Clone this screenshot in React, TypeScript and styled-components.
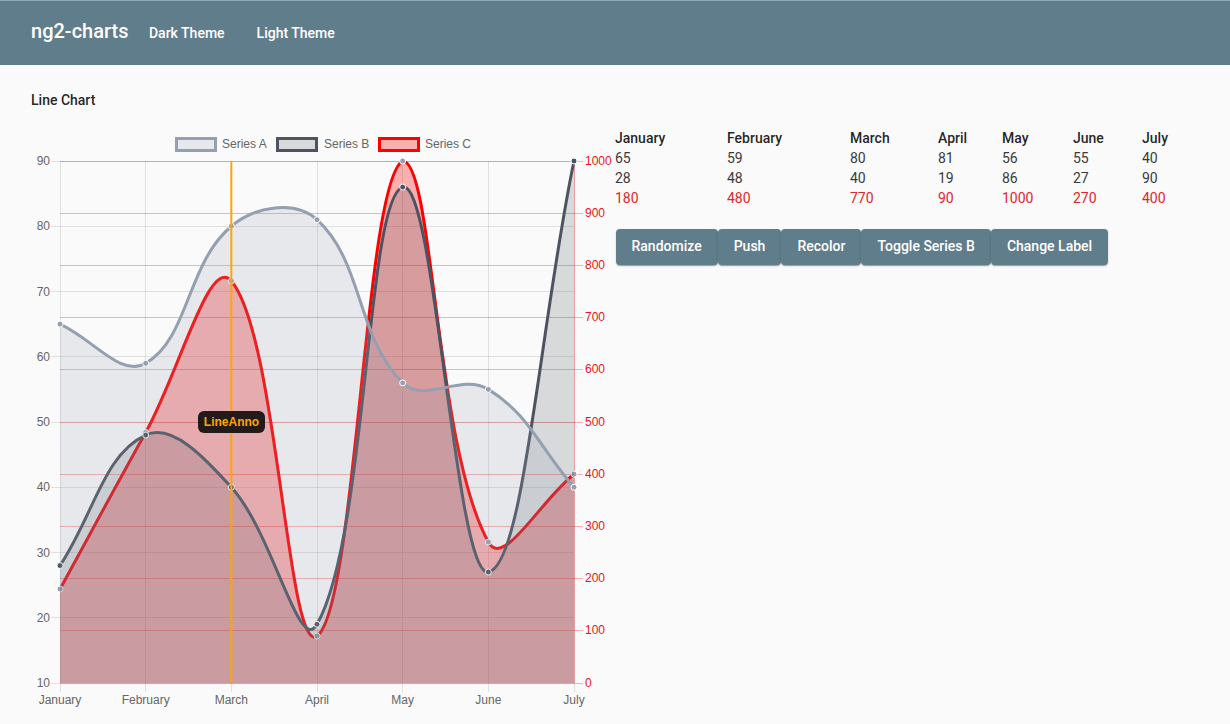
import React from 'react'
import styled, { createGlobalStyle } from 'styled-components'

const GlobalStyle = createGlobalStyle`
html, body {
  margin: 0;
  padding: 0;
  background: #fafafa;
  font-family: Roboto, "Liberation Sans", sans-serif;
  color: rgba(0, 0, 0, 0.87);
}
`

const Page = styled.div`
width: 1230px;
height: 724px;
overflow: hidden;
`

const Toolbar = styled.header`
height: 64px;
background: #607d8b;
border-top: 1px solid #8fa9b8;
display: flex;
align-items: center;
padding-left: 31px;
color: #fff;
`

const Brand = styled.span`
font-size: 20px;
font-weight: 500;
margin-right: 4.5px;
position: relative;
top: -2px;
`

const NavLink = styled.a`
font-size: 14px;
font-weight: 500;
line-height: 36px;
padding: 0 16px;
`

const Title = styled.h4`
margin: 25px 0 18px 31px;
font-size: 14px;
line-height: 20px;
font-weight: 500;
`

const Row = styled.div`
display: flex;
align-items: flex-start;
`

const ChartSvg = styled.svg`
display: block;
width: 615px;
height: 596px;
flex: none;
`

const Side = styled.div`
width: 615px;
`

const DataTable = styled.table`
border-collapse: collapse;
table-layout: fixed;
width: 596px;
font-size: 14px;
line-height: 20px;
`

const HeadCell = styled.th`
padding: 0;
text-align: left;
font-weight: 500;
`

const Cell = styled.td<{ $red?: boolean }>`
padding: 0;
font-weight: 400;
color: ${p => (p.$red ? '#e0262c' : '#3a3a3a')};
`

const Buttons = styled.div`
display: flex;
margin: 21px 0 0 0.5px;
`

const Btn = styled.button`
height: 36px;
padding: 0 16px 2px;
border: 0;
border-radius: 4px;
background: #607d8b;
color: #fff;
font-family: inherit;
font-size: 14px;
font-weight: 500;
box-shadow: 0 2px 1px -1px rgba(0, 0, 0, 0.2), 0 1px 1px 0 rgba(0, 0, 0, 0.14), 0 1px 3px 0 rgba(0, 0, 0, 0.12);
`

const AxisText = styled.text<{ $color?: string }>`
font-family: "Liberation Sans", Arial, sans-serif;
font-size: 12px;
fill: ${p => p.$color || '#666'};
`

const AnnoText = styled.text`
font-family: "Liberation Sans", Arial, sans-serif;
font-size: 12px;
font-weight: 700;
fill: #ffa500;
`

const months = ['January', 'February', 'March', 'April', 'May', 'June', 'July']
const colWidths = [112, 123, 88, 64, 71, 69, 69]

const series = [
  { label: 'Series A', data: [65, 59, 80, 81, 56, 55, 40], max: 90, min: 10, line: 'rgb(148,159,177)', fill: 'rgba(148,159,177,0.2)', point: '#949fb1' },
  { label: 'Series B', data: [28, 48, 40, 19, 86, 27, 90], max: 90, min: 10, line: 'rgb(77,83,96)', fill: 'rgba(77,83,96,0.2)', point: '#4d5360' },
  { label: 'Series C', data: [180, 480, 770, 90, 1000, 270, 400], max: 1000, min: 0, line: 'red', fill: 'rgba(255,0,0,0.3)', point: '#949fb1' },
]

const LEFT = 60
const RIGHT = 574
const TOP = 161
const BOTTOM = 683
const TENSION = 0.4

const xAt = (i: number) => LEFT + (i * (RIGHT - LEFT)) / 6
// grid lines sit on whole pixels like canvas ones do
const crisp = (v: number) => Math.floor(v) + 0.5

const clamp = (v: number, lo: number, hi: number) => Math.min(hi, Math.max(lo, v))

// same control points chart.js uses for its bezier lines
function buildPath(pts: { x: number; y: number }[]) {
  const ctrl = pts.map((cur, i) => {
    const prev = pts[i - 1] || cur
    const next = pts[i + 1] || cur
    const d01 = Math.hypot(cur.x - prev.x, cur.y - prev.y)
    const d12 = Math.hypot(next.x - cur.x, next.y - cur.y)
    const fa = (TENSION * d01) / (d01 + d12)
    const fb = (TENSION * d12) / (d01 + d12)
    return {
      px: clamp(cur.x - fa * (next.x - prev.x), LEFT, RIGHT),
      py: clamp(cur.y - fa * (next.y - prev.y), TOP, BOTTOM),
      nx: clamp(cur.x + fb * (next.x - prev.x), LEFT, RIGHT),
      ny: clamp(cur.y + fb * (next.y - prev.y), TOP, BOTTOM),
    }
  })
  let d = `M${pts[0].x} ${pts[0].y}`
  for (let i = 1; i < pts.length; i++) {
    d += ` C${ctrl[i - 1].nx} ${ctrl[i - 1].ny} ${ctrl[i].px} ${ctrl[i].py} ${pts[i].x} ${pts[i].y}`
  }
  return d
}

const LineChart: React.FC = () => {
  const leftTicks = [90, 80, 70, 60, 50, 40, 30, 20, 10]
  const rightTicks = [1000, 900, 800, 700, 600, 500, 400, 300, 200, 100, 0]
  const yLeft = (v: number) => BOTTOM - ((v - 10) / 80) * (BOTTOM - TOP)
  const yRight = (v: number) => BOTTOM - (v / 1000) * (BOTTOM - TOP)
  const legend = [
    { box: 176.5, text: 222 },
    { box: 277.5, text: 324 },
    { box: 379.5, text: 425 },
  ]

  return (
    <ChartSvg viewBox="0 128 615 596">
      <defs>
        <clipPath id="area">
          <rect x={LEFT - 2} y={TOP - 2} width={RIGHT - LEFT + 4} height={BOTTOM - TOP + 4} />
        </clipPath>
      </defs>

      {legend.map((l, i) => (
        <g key={series[i].label}>
          <rect x={l.box} y={138.5} width={39} height={12} fill={series[i].fill} stroke={series[i].line} strokeWidth={3} />
          <AxisText x={l.text} y={148}>{series[i].label}</AxisText>
        </g>
      ))}

      {months.map((m, i) => (
        <g key={m}>
          <line x1={crisp(xAt(i))} x2={crisp(xAt(i))} y1={TOP} y2={BOTTOM + 9} stroke="rgba(0,0,0,0.1)" />
          <AxisText x={xAt(i)} y={704} textAnchor="middle">{m}</AxisText>
        </g>
      ))}

      {leftTicks.map(t => (
        <g key={t}>
          <line x1={LEFT - 9} x2={RIGHT} y1={crisp(yLeft(t))} y2={crisp(yLeft(t))} stroke="rgba(0,0,0,0.1)" />
          <AxisText x={50} y={yLeft(t) + 4} textAnchor="end">{t}</AxisText>
        </g>
      ))}

      {rightTicks.map(t => (
        <g key={t}>
          <line x1={LEFT} x2={RIGHT + 9} y1={crisp(yRight(t))} y2={crisp(yRight(t))} stroke="rgba(255,0,0,0.3)" />
          <AxisText x={585} y={yRight(t) + 3.5} $color="#e8141c">{t}</AxisText>
        </g>
      ))}
      <line x1={crisp(RIGHT)} x2={crisp(RIGHT)} y1={TOP} y2={BOTTOM} stroke="rgba(255,0,0,0.3)" />

      {[...series].reverse().map(s => {
        const pts = s.data.map((v, i) => ({
          x: xAt(i),
          y: BOTTOM - ((v - s.min) / (s.max - s.min)) * (BOTTOM - TOP),
        }))
        const d = buildPath(pts)
        return (
          <g key={s.label}>
            <g clipPath="url(#area)">
              <path d={`${d} L${RIGHT} ${BOTTOM} L${LEFT} ${BOTTOM} Z`} fill={s.fill} />
              <path d={d} fill="none" stroke={s.line} strokeWidth={3} />
            </g>
            {pts.map((p, i) => (
              <circle key={i} cx={p.x} cy={p.y} r={3} fill={s.point} stroke="#fff" strokeWidth={1} />
            ))}
          </g>
        )
      })}

      <line x1={xAt(2)} x2={xAt(2)} y1={TOP} y2={BOTTOM} stroke="#ffa500" strokeWidth={2} />
      <rect x={198} y={411} width={67} height={22} rx={6} fill="rgba(0,0,0,0.85)" />
      <AnnoText x={231.5} y={426} textAnchor="middle">LineAnno</AnnoText>
    </ChartSvg>
  )
}

export default function App() {
  return (
    <Page>
      <GlobalStyle />
      <Toolbar>
        <Brand>ng2-charts</Brand>
        <NavLink>Dark Theme</NavLink>
        <NavLink>Light Theme</NavLink>
      </Toolbar>
      <Title>Line Chart</Title>
      <Row>
        <LineChart />
        <Side>
          <DataTable>
            <colgroup>
              {colWidths.map((w, i) => (
                <col key={i} width={w} />
              ))}
            </colgroup>
            <thead>
              <tr>
                {months.map(m => (
                  <HeadCell key={m}>{m}</HeadCell>
                ))}
              </tr>
            </thead>
            <tbody>
              {series.map((s, r) => (
                <tr key={s.label}>
                  {s.data.map((v, i) => (
                    <Cell key={i} $red={r === 2}>{v}</Cell>
                  ))}
                </tr>
              ))}
            </tbody>
          </DataTable>
          <Buttons>
            <Btn>Randomize</Btn>
            <Btn>Push</Btn>
            <Btn>Recolor</Btn>
            <Btn>Toggle Series B</Btn>
            <Btn>Change Label</Btn>
          </Buttons>
        </Side>
      </Row>
    </Page>
  )
}
